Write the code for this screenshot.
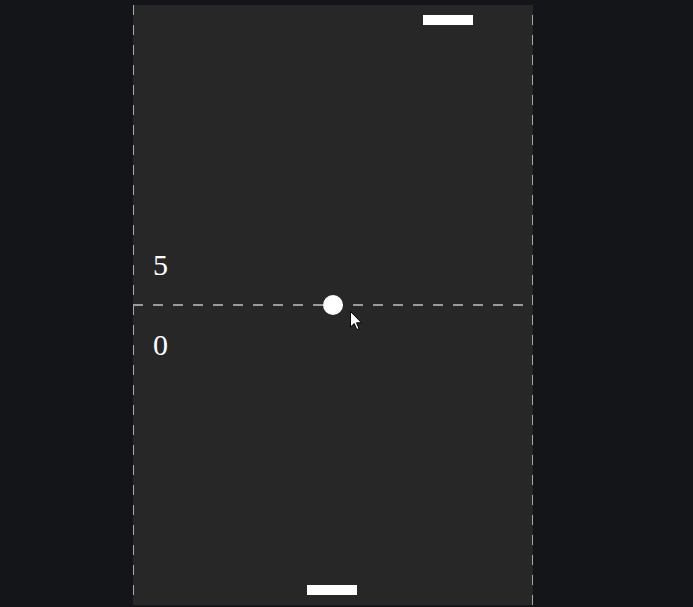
import React from 'react'

const W = 400
const H = 600

export default function App() {
  const score = { top: 5, bottom: 0 }
  const topPaddle = { x: 290, y: 10, w: 50, h: 10 }
  const bottomPaddle = { x: 174, y: 580, w: 50, h: 10 }
  const ball = { x: 200, y: 300, r: 10 }

  return (
    <div className="min-h-[607px] w-full bg-[#141519] pl-[133px] pt-[5px]">
      <div className="relative h-[600px] w-[400px] bg-[#272727]">
        <svg width={W} height={H} viewBox={`0 0 ${W} ${H}`} className="block">
          {/* side walls */}
          <line x1={0} y1={0} x2={0} y2={H} stroke="#a8a8a8" strokeWidth={2} strokeDasharray="10 10" />
          <line x1={W} y1={H} x2={W} y2={0} stroke="#a8a8a8" strokeWidth={2} strokeDasharray="10 10" />
          {/* net */}
          <line x1={0} y1={300} x2={W} y2={300} stroke="#9a9a9a" strokeWidth={2} strokeDasharray="10 10" />

          <text x={20} y={270} fill="#ffffff" fontSize={30} fontFamily='"Liberation Serif", serif'>{score.top}</text>
          <text x={20} y={350} fill="#ffffff" fontSize={30} fontFamily='"Liberation Serif", serif'>{score.bottom}</text>

          <rect x={topPaddle.x} y={topPaddle.y} width={topPaddle.w} height={topPaddle.h} fill="#ffffff" />
          <rect x={bottomPaddle.x} y={bottomPaddle.y} width={bottomPaddle.w} height={bottomPaddle.h} fill="#ffffff" />
          <circle cx={ball.x} cy={ball.y} r={ball.r} fill="#ffffff" />
        </svg>
        {/* mouse pointer */}
        <svg width={14} height={22} viewBox="0 0 14 22" className="absolute left-[216.5px] top-[305.5px]">
          <path d="M0.5 0.5 L0.5 16 L4.2 12.6 L6.8 18.6 L9 17.6 L6.5 11.8 L11.5 11.8 Z" fill="#ffffff" stroke="#000000" strokeWidth={1} strokeLinejoin="round" />
        </svg>
      </div>
    </div>
  )
}
